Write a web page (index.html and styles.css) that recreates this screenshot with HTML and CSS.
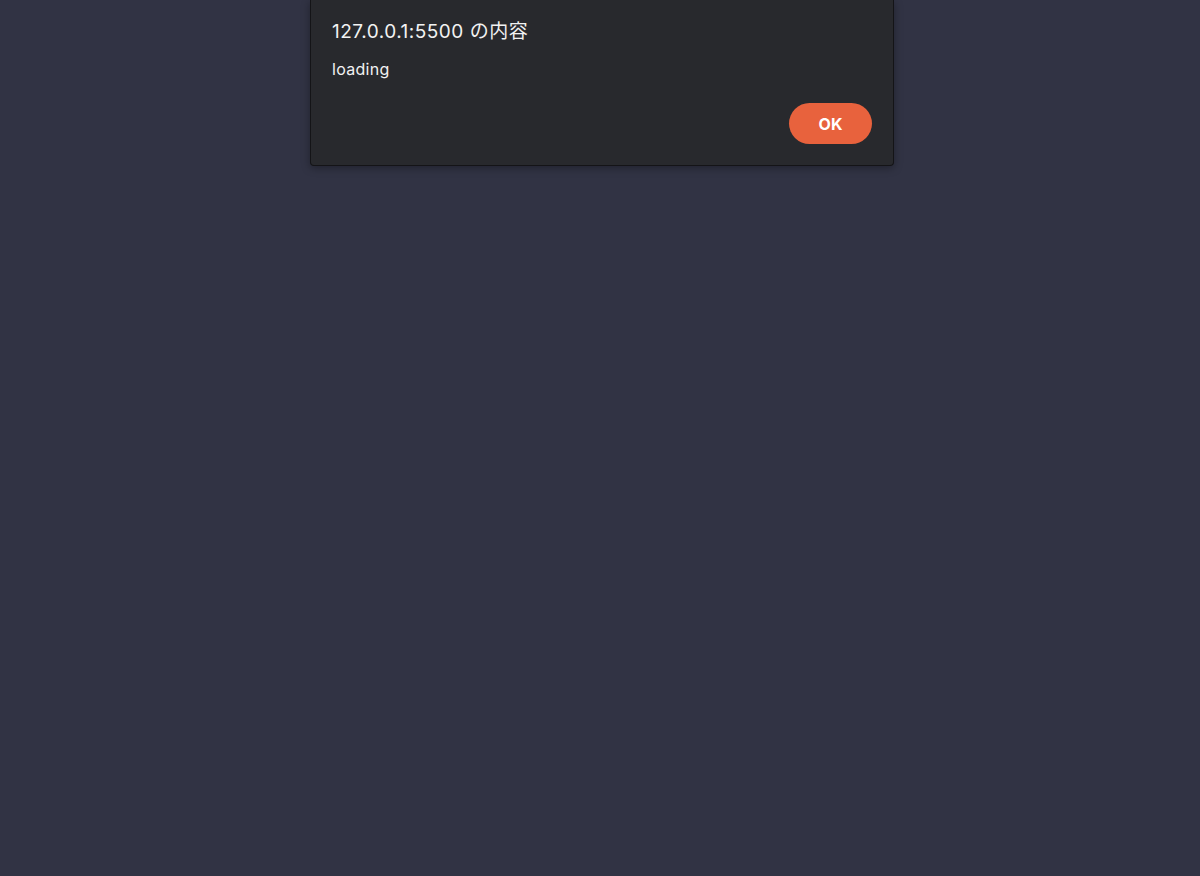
FILE: index.html
```html
<!DOCTYPE html>
<html lang="ja">
<head>
<meta charset="utf-8">
<title>alert</title>
<link rel="stylesheet" href="styles.css">
</head>
<body>
<div class="dialog">
  <div class="title">127.0.0.1:5500 の内容</div>
  <div class="message">loading</div>
  <div class="actions">
    <button class="ok">OK</button>
  </div>
</div>
</body>
</html>
```
FILE: styles.css
```css
html, body {
  margin: 0;
  padding: 0;
  height: 100%;
}
body {
  background: #313344;
  font-family: Inter, "Liberation Sans", "Noto Sans CJK JP", sans-serif;
}
.dialog {
  box-sizing: border-box;
  width: 584px;
  height: 166px;
  margin: 0 0 0 310px;
  background: #28292d;
  border: 1px solid #141417;
  border-top: none;
  border-radius: 0 0 4px 4px;
  box-shadow: 0 2px 8px rgba(0, 0, 0, 0.35);
  padding: 20px 20px 0 21px;
  color: #f2f2f2;
}
.title {
  font-size: 19px;
  line-height: 24px;
  height: 24px;
  letter-spacing: 0.5px;
}
.message {
  margin-top: 14px;
  font-size: 16px;
  line-height: 22px;
  letter-spacing: 0.3px;
}
.actions {
  display: flex;
  justify-content: flex-end;
  margin-top: 23px;
}
.ok {
  width: 83px;
  height: 41px;
  border: none;
  border-radius: 21px;
  background: #e8623d;
  color: #ffffff;
  font-family: Inter, "Liberation Sans", sans-serif;
  font-weight: 700;
  font-size: 16px;
  padding: 0;
  margin-right: 1px;
}
```
